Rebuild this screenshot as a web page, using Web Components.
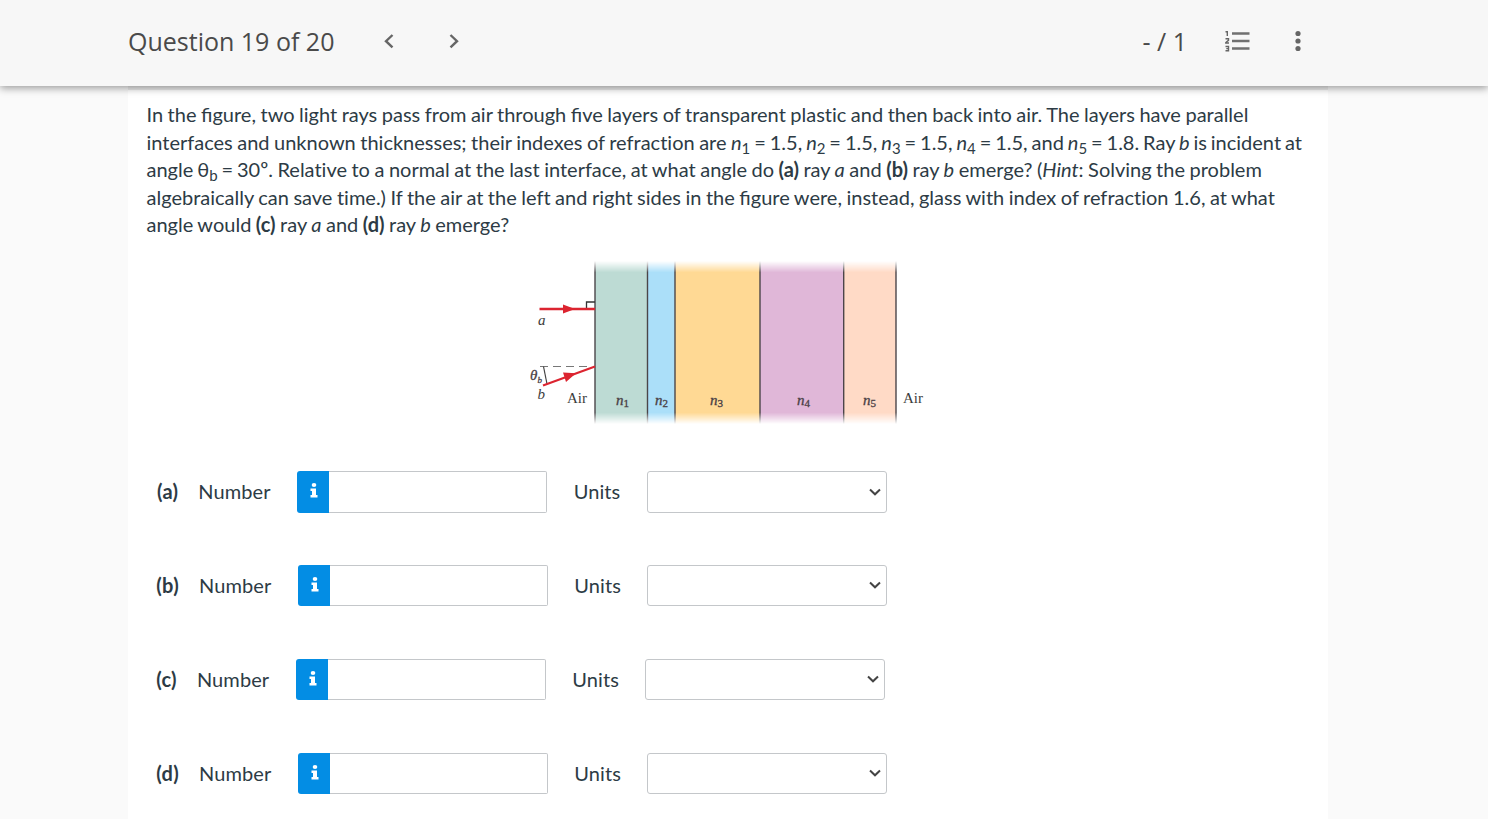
<!DOCTYPE html>
<html lang="en">
<head>
<meta charset="utf-8">
<title>Question 19 of 20</title>
<style>
  body {
    margin: 0;
    height: 819px;
    overflow: hidden;
    background: #fafafa;
    color: #2d3b45;
    font-family: Lato, "Liberation Sans", sans-serif;
  }
</style>
</head>
<body>
<quiz-app></quiz-app>
<script>
class QuizHeader extends HTMLElement {
  constructor() {
    super();
    this.attachShadow({ mode: 'open' });
  }
  connectedCallback() {
    this.shadowRoot.innerHTML = `
    <style>
    :host {
      display: flex;
      align-items: center;
      box-sizing: border-box;
      height: 86px;
      padding: 0 187px 0 128px;
      background: #f7f7f7;
      color: #4a4a4a;
      font: 25px/34px "Open Sans", sans-serif;
      box-shadow: 0 2px 8px rgba(0, 0, 0, .4);
      position: relative;
      z-index: 1;
    }
    h1 {
      font: inherit;
      margin: 0;
      width: 253px;
      white-space: nowrap;
    }
    .score {
      margin-left: auto;
      margin-right: 37px;
      white-space: nowrap;
    }
    h1, .score { padding-bottom: 4px; }
    button {
      display: block;
      border: 0;
      padding: 0;
      background: none;
      margin-bottom: 4px;
    }
    .prev { margin-right: 49px; }
    .list { margin-right: 45px; }
    svg { display: block; }
    </style>
    <h1>${this.getAttribute('heading')}</h1>
    <button class="prev" aria-label="Previous"><svg width="16" height="20" viewBox="0 0 16 20"><path d="M11.5 4 5 10.2l6.5 6.2" fill="none" stroke="#666" stroke-width="2.4"/></svg></button>
    <button aria-label="Next"><svg width="16" height="20" viewBox="0 0 16 20"><path d="M4.500 4 11 10.200l-6.500 6.200" fill="none" stroke="#666" stroke-width="2.400"/></svg></button>
    <span class="score">${this.getAttribute('score')}</span>
    <button class="list" aria-label="Questions"><svg width="26" height="24" viewBox="0 0 26 24">
      <path d="M8 4.500H25.500M8 12H25.500M8 19.500H25.500" stroke="#707070" stroke-width="2.400"/>
      <path d="M1.500 2.700H3.300V7M1.500 9.700h3v1.600L1.800 13.500V14H5M1.500 17.500h3v4.300h-3M2.300 19.600H4.500" fill="none" stroke="#666" stroke-width="1.400"/>
    </svg></button>
    <button aria-label="More"><svg width="6" height="24" viewBox="0 0 6 24" fill="#666"><circle cx="3" cy="4.500" r="2.600"/><circle cx="3" cy="12" r="2.600"/><circle cx="3" cy="19.500" r="2.600"/></svg></button>
    `;
  }
}
customElements.define('quiz-header', QuizHeader);

class LayerFigure extends HTMLElement {
  constructor() {
    super();
    this.attachShadow({ mode: 'open' });
  }
  connectedCallback() {
    // x, width, fill, label x
    const layers = [
      [67, 53, '#bddbd4', 88],
      [120, 27, '#abdff9', 127],
      [147, 85, '#ffd994', 182],
      [232, 84, '#e0b7d8', 269],
      [316, 52, '#ffdac6', 335]
    ];
    const edges = [67, 119.5, 147, 232, 315.7, 368];
    this.shadowRoot.innerHTML = `
    <style>
    :host { display: block; }
    svg { display: block; margin: 0 auto; }
    text { font-family: "Liberation Serif", serif; font-size: 15px; fill: #3c3c3c; }
    .i { font-style: italic; }
    .n { fill: #4a4045; stroke: #4a4045; stroke-width: .3; }
    .sub { font-size: 11px; font-style: normal; }
    </style>
    <svg width="400" height="166" viewBox="0 0 400 166">
      <defs>
        <linearGradient id="fade" x1="0" y1="0" x2="0" y2="1">
          <stop offset="0" stop-color="#fff" stop-opacity="0"/>
          <stop offset=".07" stop-color="#fff"/>
          <stop offset=".93" stop-color="#fff"/>
          <stop offset="1" stop-color="#fff" stop-opacity="0"/>
        </linearGradient>
        <mask id="ends" maskUnits="userSpaceOnUse" x="0" y="0" width="400" height="166">
          <rect y="1" width="400" height="163" fill="url(#fade)"/>
        </mask>
      </defs>
      <g mask="url(#ends)">
        ${layers.map(([x, w, fill]) => `<rect x="${x}" y="1" width="${w}" height="163" fill="${fill}"/>`).join('')}
        ${edges.map(x => `<path d="M${x} 1V164" stroke="#4b4549" stroke-width="1.400"/>`).join('')}
      </g>
      ${layers.map(([, , , x], i) => `<text class="i n" x="${x}" y="144.500" font-size="16">n<tspan class="sub" dy="2.500">${i + 1}</tspan></text>`).join('')}
      <text x="39" y="143.400">Air</text>
      <text x="375" y="143.400">Air</text>
      <path d="M58.500 48V42H67" fill="none" stroke="#333" stroke-width="1.300"/>
      <path d="M11.500 49H67" stroke="#dc2430" stroke-width="2.400"/>
      <path d="M35 44.500 47 49 35 53.500Z" fill="#dc2430"/>
      <text class="i" x="10" y="64.500">a</text>
      <path d="M12 106.500H62" stroke="#777" stroke-width="1" stroke-dasharray="8 5"/>
      <path d="M15.500 106.500 19 124" stroke="#444" stroke-width="1.200"/>
      <path d="M15 125.500 67 106.500" stroke="#dc2430" stroke-width="2.200"/>
      <path d="M35 112.500 48 113.300 38 122Z" fill="#dc2430"/>
      <text class="i n" x="2" y="120">θ<tspan font-size="9" dy="3">b</tspan></text>
      <text class="i" x="9.500" y="138.500">b</text>
    </svg>
    `;
  }
}
customElements.define('layer-figure', LayerFigure);

class AnswerRow extends HTMLElement {
  constructor() {
    super();
    this.attachShadow({ mode: 'open' });
  }
  connectedCallback() {
    this.shadowRoot.innerHTML = `
    <style>
    :host {
      display: flex;
      align-items: center;
      height: 41px;
      font-size: 20px;
      line-height: 28px;
    }
    b { margin-right: 20px; letter-spacing: .3px; padding-bottom: 1px; }
    .number { margin-right: 26.500px; letter-spacing: .1px; }
    .units { margin: 0 26.200px 0 26.500px; letter-spacing: .1px; }
    .number, .units { padding-bottom: 1px; }
    .field { display: flex; width: 250px; height: 100%; }
    .info {
      display: flex;
      align-items: center;
      justify-content: center;
      width: 32px;
      border: 0;
      padding: 0 0 2px 2px;
      box-sizing: border-box;
      background: #038de4;
      border-radius: 3px 0 0 3px;
    }
    input {
      flex: 1;
      min-width: 0;
      box-sizing: border-box;
      border: 1px solid #c4c7ca;
      border-left: 0;
      border-radius: 0 2px 2px 0;
      outline: 0;
      background: #fff;
    }
    .select {
      display: flex;
      align-items: center;
      justify-content: flex-end;
      box-sizing: border-box;
      width: 240px;
      height: 100%;
      padding-right: 5px;
      border: 1px solid #c4c7ca;
      border-radius: 3px;
      background: #fff;
    }
    svg { display: block; }
    </style>
    <b><slot></slot></b>
    <span class="number">Number</span>
    <div class="field">
      <button class="info" aria-label="Info"><svg width="8" height="15" viewBox="0 0 8 15" fill="#fff"><ellipse cx="4" cy="2" rx="2.300" ry="1.900"/><path d="M.5 5.500H6v6.500H7.500V14.500H.5V12H2V8H.5Z"/></svg></button>
      <input type="text" aria-label="Number">
    </div>
    <span class="units">Units</span>
    <div class="select"><svg width="12" height="8" viewBox="0 0 12 8"><path d="M1 1.500 6 6.300 11 1.500" fill="none" stroke="#444" stroke-width="2"/></svg></div>
    `;
  }
}
customElements.define('answer-row', AnswerRow);

class QuizApp extends HTMLElement {
  constructor() {
    super();
    this.attachShadow({ mode: 'open' });
  }
  connectedCallback() {
    this.shadowRoot.innerHTML = `
    <style>
    :host { display: block; }
    main {
      box-sizing: border-box;
      width: 1200px;
      height: 733px;
      margin-left: 128px;
      padding: 11px 0 0;
      background: #fff;
      border-top: 4px solid #ededed;
      overflow: hidden;
    }
    p {
      margin: 0 0 0 18.500px;
      font-size: 20px;
      line-height: 27.500px;
      white-space: nowrap;
      word-spacing: -.62px;
      font-variant-ligatures: none;
    }
    .fi { font-variant-ligatures: normal; }
    .values { word-spacing: -1.200px; }
    .angle { word-spacing: -1.200px; }
    sub { vertical-align: -4px; font-size: .75em; line-height: 0; }
    layer-figure { margin: 21px 0 45px; }
    answer-row { margin: 0 0 53px 28.300px; }
    answer-row:first-of-type { height: 42px; margin-bottom: 52px; margin-left: 29px; }
    </style>
    <quiz-header heading="Question 19 of 20" score="- / 1"></quiz-header>
    <main>
      <p>In the <span class="fi">figure</span>, two light rays pass from air through <span class="fi">five</span> layers of transparent plastic and then back into air. The layers have parallel<br>
      interfaces and unknown thicknesses; their indexes of refraction are <span class="values"><i>n</i><sub>1</sub> = 1.5, <i>n</i><sub>2</sub> = 1.5, <i>n</i><sub>3</sub> = 1.5, <i>n</i><sub>4</sub> = 1.5, and <i>n</i><sub>5</sub> = 1.8. Ray <i>b</i> is incident at</span><br>
      <span class="angle">angle θ<sub>b</sub> = 30º.</span> Relative to a normal at the last interface, at what angle do <b>(a)</b> ray <i>a</i> and <b>(b)</b> ray <i>b</i> emerge? (<i>Hint</i>: Solving the problem<br>
      algebraically can save time.) If the air at the left and right sides in the <span class="fi">figure</span> were, instead, glass with index of refraction 1.6, at what<br>
      angle would <b>(c)</b> ray <i>a</i> and <b>(d)</b> ray <i>b</i> emerge?</p>
      <layer-figure></layer-figure>
      <answer-row>(a)</answer-row>
      <answer-row>(b)</answer-row>
      <answer-row>(c)</answer-row>
      <answer-row>(d)</answer-row>
    </main>
    `;
  }
}
customElements.define('quiz-app', QuizApp);
</script>
</body>
</html>
